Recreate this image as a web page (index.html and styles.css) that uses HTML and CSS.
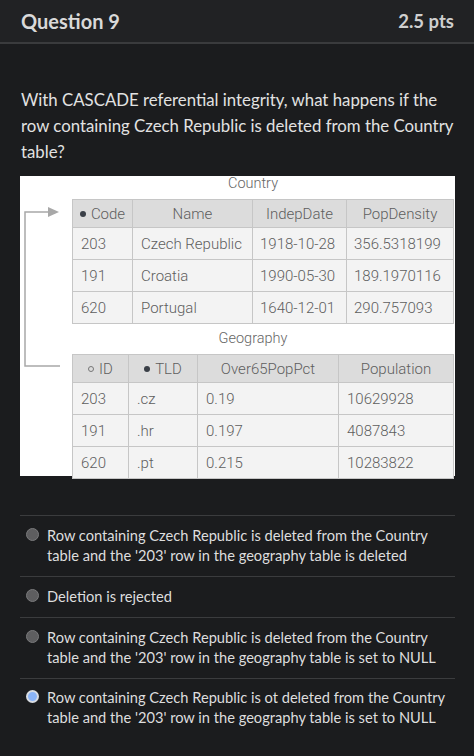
FILE: index.html
```html
<!DOCTYPE html>
<html>
<head>
<meta charset="utf-8">
<link rel="stylesheet" href="styles.css">
</head>
<body>
<header class="qhead">
  <span class="qtitle">Question 9</span>
  <span class="qpts">2.5 pts</span>
</header>
<main class="qbody">
  <p class="qtext">With CASCADE referential integrity, what happens if the row containing Czech Republic is deleted from the Country table?</p>
  <div class="figure">
    <svg class="arrow" width="435" height="300" viewBox="0 0 435 300">
      <polyline points="40,190 5,190 5,36 30,36" fill="none" stroke="#a8a8a8" stroke-width="1.5"/>
      <polygon points="28,31 39,36 28,41" fill="#a8a8a8"/>
    </svg>
    <div class="caption">Country</div>
    <table class="dtab t1">
      <colgroup><col class="c1"><col class="c2"><col class="c3"><col class="c4"></colgroup>
      <tr><th><span class="dot filled"></span>Code</th><th>Name</th><th>IndepDate</th><th>PopDensity</th></tr>
      <tr><td>203</td><td>Czech Republic</td><td>1918-10-28</td><td>356.5318199</td></tr>
      <tr><td>191</td><td>Croatia</td><td>1990-05-30</td><td>189.1970116</td></tr>
      <tr><td>620</td><td>Portugal</td><td>1640-12-01</td><td>290.757093</td></tr>
    </table>
    <div class="caption cap2">Geography</div>
    <table class="dtab t2">
      <colgroup><col class="g1"><col class="g2"><col class="g3"><col class="g4"></colgroup>
      <tr><th><span class="dot hollow"></span>ID</th><th><span class="dot filled"></span>TLD</th><th>Over65PopPct</th><th>Population</th></tr>
      <tr><td>203</td><td>.cz</td><td>0.19</td><td>10629928</td></tr>
      <tr><td>191</td><td>.hr</td><td>0.197</td><td>4087843</td></tr>
      <tr><td>620</td><td>.pt</td><td>0.215</td><td>10283822</td></tr>
    </table>
  </div>
  <ul class="answers">
    <li class="ans"><span class="radio"></span><span class="atext">Row containing Czech Republic is deleted from the Country table and the '203' row in the geography table is deleted</span></li>
    <li class="ans"><span class="radio"></span><span class="atext">Deletion is rejected</span></li>
    <li class="ans"><span class="radio"></span><span class="atext">Row containing Czech Republic is deleted from the Country table and the '203' row in the geography table is set to NULL</span></li>
    <li class="ans"><span class="radio checked"></span><span class="atext">Row containing Czech Republic is ot deleted from the Country table and the '203' row in the geography table is set to NULL</span></li>
  </ul>
</main>
</body>
</html>
```
FILE: styles.css
```css
html, body {
  margin: 0;
  padding: 0;
}
body {
  background: #1b1c1e;
  font-family: Lato, "Noto Sans", sans-serif;
  color: #dcdcdc;
  width: 474px;
  height: 756px;
  overflow: hidden;
}
.qhead {
  height: 44px;
  box-sizing: border-box;
  padding: 0 20px 0 21px;
  display: flex;
  justify-content: space-between;
  align-items: center;
  background: #212224;
  border-bottom: 2px solid #3a3b3d;
}
.qtitle {
  font-weight: 700;
  font-size: 20px;
  color: #d9d9d9;
}
.qpts {
  font-weight: 700;
  font-size: 18.5px;
  color: #cfcfcf;
}
.qbody {
  padding: 43px 19px 0 20px;
}
.qtext {
  margin: 0 -12px 11px 1px;
  font-size: 16.8px;
  line-height: 26px;
  color: #e2e2e2;
}
.figure {
  position: relative;
  width: 435px;
  height: 300px;
  background: #ffffff;
  box-sizing: border-box;
  padding-left: 52px;
  font-family: Roboto, "Liberation Sans", sans-serif;
  font-weight: 300;
}
.arrow {
  position: absolute;
  left: 0;
  top: 0;
}
.caption {
  margin-left: -52px;
  padding-left: 31px;
  text-align: center;
  font-size: 14.5px;
  height: 23px;
  line-height: 16px;
  color: #666;
}
.cap2 {
  height: 30px;
  line-height: 30px;
}
.dtab {
  border-collapse: collapse;
  width: 381px;
  table-layout: fixed;
  font-size: 15px;
  color: #5e5e5e;
}
.dtab th, .dtab td {
  border: 1.5px solid #c6c6c6;
  padding: 0 0 0 8px;
  white-space: nowrap;
  overflow: hidden;
}
.dtab th {
  background: #dcdcdc;
  font-weight: 300;
  height: 27px;
  text-align: center;
  padding: 0;
}
.dtab td {
  background: #f3f3f3;
  height: 31px;
  text-align: left;
}
.t1 td:nth-child(3), .t1 td:nth-child(4) {
  padding-left: 7px;
}
.c1 { width: 60px; }
.c2 { width: 120px; }
.c3 { width: 94px; }
.c4 { width: 107px; }
.g1 { width: 56px; }
.g2 { width: 69px; }
.g3 { width: 141px; }
.g4 { width: 115px; }
.dot {
  display: inline-block;
  width: 6px;
  height: 6px;
  border-radius: 50%;
  margin-right: 5px;
  vertical-align: 2px;
  box-sizing: border-box;
}
.dot.filled {
  background: #3a3f47;
}
.dot.hollow {
  border: 1px solid #777;
}
.answers {
  list-style: none;
  margin: 39px 0 0 0;
  padding: 0;
}
.ans {
  display: flex;
  align-items: flex-start;
  border-top: 1px solid #3b3c3e;
  padding: 10px 0 10px 6px;
  font-size: 14.65px;
  line-height: 20px;
  color: #dedede;
}
.ans:last-child {
  padding-top: 9px;
}
.radio {
  flex: none;
  width: 13px;
  height: 13px;
  border-radius: 50%;
  box-sizing: border-box;
  background: #5e5e60;
  border: 1px solid #7a7a7c;
  margin: 2px 8px 0 0;
}
.radio.checked {
  background: #8ab4f8;
  border: 2px solid #d8dce2;
}
.atext {
  display: block;
}
```
